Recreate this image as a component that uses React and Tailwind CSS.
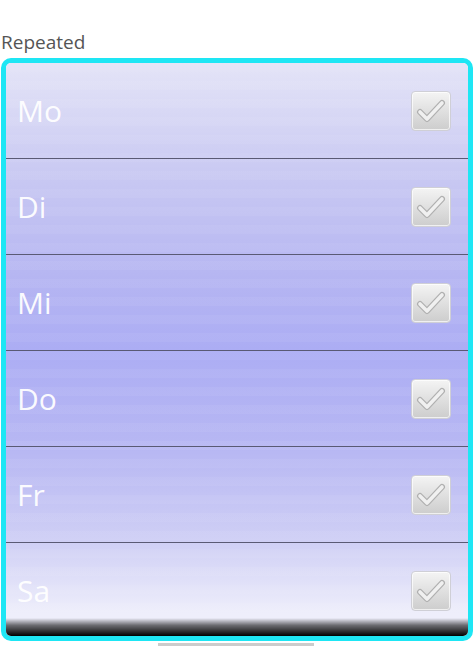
const days = ['Mo', 'Di', 'Mi', 'Do', 'Fr', 'Sa']

function CheckBox() {
  return (
    <div className="grid h-[40px] w-[40px] place-items-center rounded-[4px] border border-[#cfcfd6] bg-[linear-gradient(180deg,#f4f4f4,#e2e2e2_45%,#cdcdcd)] shadow-[inset_0_0_0_1px_rgba(255,255,255,0.7)]">
      <svg width="30" height="26" viewBox="0 0 30 26" fill="none">
        <path d="M4 14 L11 21 L26 5" stroke="#b0b0b0" strokeWidth="6" strokeLinecap="round" strokeLinejoin="round" />
        <path d="M4 14 L11 21 L26 5" stroke="#f0f0f0" strokeWidth="3.6" strokeLinecap="round" strokeLinejoin="round" />
      </svg>
    </div>
  )
}

function DayRow({ label, last }) {
  return (
    <div className={last ? '' : 'border-b border-[#5a5a74]'}>
      <div className="flex h-[95px] items-center justify-between pl-[11px] pr-[17px]">
        <span className="text-[30px] leading-none text-white/95">{label}</span>
        <CheckBox />
      </div>
    </div>
  )
}

export default function App() {
  return (
    <div className="h-[647px] w-[474px] bg-white font-['Open_Sans',sans-serif]">
      <p className="px-[1px] pt-[30px] text-[19px] leading-[24px] text-[#555555]">Repeated</p>
      <div className="mx-[1px] mt-[4px] h-[583px] rounded-[10px] border-[5px] border-[#1ee6f4]">
        <div className="relative h-full overflow-hidden rounded-[5px] bg-[image:repeating-linear-gradient(180deg,rgba(255,255,255,0.05)_0px,rgba(255,255,255,0.05)_9px,transparent_9px,transparent_18px),linear-gradient(180deg,#e4e4f7_0%,#c8c8f2_20%,#b5b5f2_38%,#acadf4_50%,#b8b8f3_68%,#d0d0f5_84%,#eeeefb_96%)]">
          {days.map((d, i) => (
            <DayRow key={d} label={d} last={i === days.length - 1} />
          ))}
          <div className="absolute inset-x-0 bottom-0 h-[18px] bg-[linear-gradient(180deg,rgba(0,0,0,0),rgba(0,0,0,0.55)_40%,#000)]" />
        </div>
      </div>
      <div className="ml-[158px] mt-[2px] h-[3px] w-[156px] bg-[#cccccc]" />
    </div>
  )
}
